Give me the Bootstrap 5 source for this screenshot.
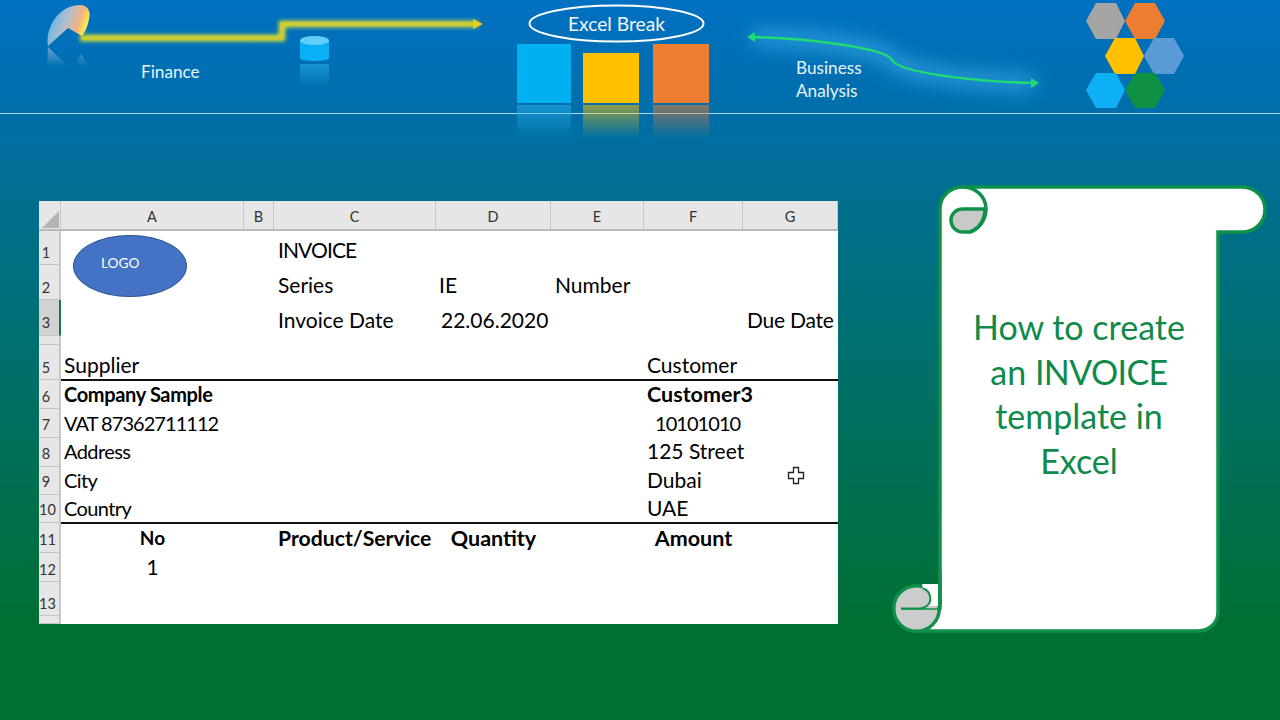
<!DOCTYPE html>
<html lang="en">
<head>
<meta charset="utf-8">
<title>How to create an INVOICE template in Excel</title>
<link href="https://cdn.jsdelivr.net/npm/bootstrap@5.3.0/dist/css/bootstrap.min.css" rel="stylesheet">
<style>
html,body{height:100%}
body{width:1280px;height:720px;overflow:hidden;margin:0;font-family:Lato,"Liberation Sans",sans-serif;
  background:linear-gradient(180deg,#0070c2 0,#006faa 110px,#006f90 195px,#006f33 625px,#006f33 100%)}
.slide-band{height:114px;border-bottom:1px solid #a9d8ee}
.band-art{left:0;top:0;width:1280px;height:140px}
.band-label{color:#e6f4fb;font-size:17.200px;line-height:23px;white-space:nowrap}
.lbl-fin{left:141px;top:60px}
.lbl-biz{left:796px;top:56px}
.lbl-brand{left:529px;top:5px;width:175px;height:37px;font-size:19.200px;color:#f0f9ff}
.slide-main{padding:71px 0 0 39px}
.sheet{margin-top:16px;width:799px;height:423px;background:#fff;display:grid;color:#000;
  grid-template-columns:22px 183px 30px 162px 115px 93px 99px 95px;
  grid-template-rows:30px 34px 35px 36px 9px 35px 29px 29px 29px 28px 28px 30px 29px 34px 8px}
.sheet>div{white-space:nowrap;font-size:21px;line-height:26px;display:flex;align-items:center;min-width:0;min-height:0}
.sheet>.hd{background:#e6e6e6;font-size:14.500px;color:#333;justify-content:center;padding-top:3px;border-bottom:2px solid #b9b9b9;border-right:1px solid #c6c6c6;line-height:16px}
.sheet>.rw{background:#e6e6e6;font-size:14.500px;color:#333;grid-column:1;justify-content:flex-start;padding:5px 0 0 0;border-bottom:1px solid #c4c4c4;border-right:2px solid #c9c9c9;line-height:16px;overflow:hidden}
.sheet>.rw-lo{padding-top:11px}
.sheet>.rw-hi{padding-top:3px}
.rw span{display:block;width:14px;text-align:center}
.sheet>.rw-on{background:#d2d2d2;border-right:2px solid #217346}
.corner{width:0;height:0;border-style:solid;border-width:0 0 17px 17px;border-color:transparent transparent #b4b4b4 transparent;margin:auto 0 1px 3px}
.sheet>.corner-cell{background:#e6e6e6;border-bottom:2px solid #b9b9b9;border-right:1px solid #c6c6c6;grid-column:1;grid-row:1}
.ca{grid-column:2}.cb{grid-column:3}.cc{grid-column:4}.cd{grid-column:5}.ce{grid-column:6}.cf{grid-column:7}.cg{grid-column:8}
.r0{grid-row:1}.r1{grid-row:2}.r2{grid-row:3}.r3{grid-row:4}.r4{grid-row:5}.r5{grid-row:6}.r6{grid-row:7}.r7{grid-row:8}.r8{grid-row:9}.r9{grid-row:10}.r10{grid-row:11}.r11{grid-row:12}.r12{grid-row:13}.r13{grid-row:14}.r14{grid-row:15}
.sheet>.t{padding-left:3px;padding-top:4px}
.sheet>.up{padding-top:0;padding-bottom:1px}
.sheet>.up2{padding-top:0;padding-bottom:3px}
.sheet>.tc{justify-content:center;padding-left:0}
.sheet>.b{font-weight:700;font-size:21.500px}
.sheet>.b-co{font-size:20px;letter-spacing:-.35px}
.sheet>.b-no{font-size:19px}
.sheet>.b-ps{font-size:21.200px}
.sheet>.nar{font-size:20px;letter-spacing:-.6px}
.sheet>.nar-d{font-size:20px;letter-spacing:-.95px}
.sheet>.inv{letter-spacing:-.9px}
.sheet>.due{letter-spacing:-.25px}
.sheet>.in4{padding-left:4px}
.sheet>.in5{padding-left:5px}
.sheet>.in11{padding-left:11px}
.sheet>.rule{grid-column:2/-1;align-self:end;height:2px;background:#111;min-height:2px;margin-bottom:-1px}
.sheet>.logo-oval{left:34px;top:34px;width:114px;height:62px;border-radius:50%;background:#4472c4;border:1px solid #2f528f;color:#fff;font-size:13.700px;padding:15px 0 0 27px;line-height:24px;align-items:flex-start}
.cross{left:748px;top:265px;width:18px;height:20px}
.scroll-box{margin-left:53px;width:380px;height:456px;flex:none}
.scroll-art{left:0;top:0;width:380px;height:456px}
.scroll-text{width:280px;margin-left:48px;padding-top:120px;color:#108a4a;font-size:34px;line-height:44.600px;text-align:center}
.cap-tight{letter-spacing:-.6px}
</style>
</head>
<body>
<div class="slide-band position-relative">
  <svg class="band-art position-absolute" viewBox="0 0 1280 140" aria-hidden="true">
    <defs>
      <linearGradient id="pie" x1="0" y1="0" x2="1" y2="0.35"><stop offset="0" stop-color="#3fb2f2"/><stop offset=".55" stop-color="#b8bfc8"/><stop offset=".8" stop-color="#f3b37c"/><stop offset="1" stop-color="#fff04a"/></linearGradient>
      <linearGradient id="fadeB" x1="0" y1="0" x2="0" y2="1"><stop offset="0" stop-color="#28b0ee" stop-opacity=".55"/><stop offset="1" stop-color="#28b0ee" stop-opacity="0"/></linearGradient>
      <linearGradient id="fadeY" x1="0" y1="0" x2="0" y2="1"><stop offset="0" stop-color="#ffc000" stop-opacity=".55"/><stop offset="1" stop-color="#ffc000" stop-opacity="0"/></linearGradient>
      <linearGradient id="fadeO" x1="0" y1="0" x2="0" y2="1"><stop offset="0" stop-color="#ed7d31" stop-opacity=".55"/><stop offset="1" stop-color="#ed7d31" stop-opacity="0"/></linearGradient>
      <linearGradient id="fadeP" x1="0" y1="0" x2="0" y2="1"><stop offset="0" stop-color="#b5c8d8" stop-opacity=".6"/><stop offset="1" stop-color="#b5c8d8" stop-opacity="0"/></linearGradient>
      <filter id="blur2" x="-10%" y="-300%" width="120%" height="700%"><feGaussianBlur stdDeviation="2"/></filter>
      <filter id="blur8" x="-20%" y="-100%" width="140%" height="300%"><feGaussianBlur stdDeviation="9"/></filter>
    </defs>
    <path d="M48 46C45 26 60 5 80 5C88 5 91 12 89 19C88 26 85 32 82 36L68 28Z" fill="url(#pie)"/>
    <path d="M48 47L68 66L47 66Z M75 66L81 54L88 66Z" fill="url(#fadeP)"/>
    <path d="M80 38H282V24H478" fill="none" stroke="#eeea28" stroke-width="6" filter="url(#blur2)"/>
    <path d="M82 38H282V24H474" fill="none" stroke="#cfca30" stroke-width="3"/>
    <path d="M473 19L483 24L473 29Z" fill="#e6c81e"/>
    <path d="M300 41V58C300 62 329 62 329 58V41Z" fill="#0ab0f5"/>
    <ellipse cx="314.500" cy="40.500" rx="14.500" ry="4.500" fill="#63cdfa"/>
    <rect x="300" y="64" width="29" height="23" fill="url(#fadeB)"/>
    <rect x="517" y="44" width="54" height="59" fill="#00b0f0"/>
    <rect x="583" y="53" width="56" height="50" fill="#ffc000"/>
    <rect x="653" y="44" width="56" height="59" fill="#ed7d31"/>
    <rect x="517" y="105" width="54" height="33" fill="url(#fadeB)"/>
    <rect x="583" y="105" width="56" height="33" fill="url(#fadeY)"/>
    <rect x="653" y="105" width="56" height="33" fill="url(#fadeO)"/>
    <ellipse cx="616.500" cy="23.500" rx="87" ry="18" fill="none" stroke="#fff" stroke-width="2"/>
    <path d="M752 37C800 38 885 47 892 60C900 74 985 82 1034 83" fill="none" stroke="#3fb0f0" stroke-opacity=".6" stroke-width="18" filter="url(#blur8)"/>
    <path d="M752 37C800 38 885 47 892 60C900 74 985 82 1034 83" fill="none" stroke="#1fdc72" stroke-width="2.400"/>
    <path d="M755 32L747 37L755 42Z M1031 78L1039 83L1031 88Z" fill="#1fdc72"/>
    <polygon points="1086,21 1096,3 1116,3 1125,21 1116,39 1096,39" fill="#a5a5a5"/>
    <polygon points="1125,21 1135,3 1155,3 1165,21 1155,39 1135,39" fill="#ed7d31"/>
    <polygon points="1105,56 1115,38 1135,38 1144,56 1135,74 1115,74" fill="#ffc000"/>
    <polygon points="1144,56 1154,38 1174,38 1184,56 1174,74 1154,74" fill="#5b9bd5"/>
    <polygon points="1086,90 1096,73 1116,73 1125,90 1116,108 1096,108" fill="#0eb0f5"/>
    <polygon points="1125,90 1135,73 1155,73 1165,90 1155,108 1135,108" fill="#0f9145"/>
  </svg>
  <span class="band-label lbl-fin position-absolute">Finance</span>
  <div class="band-label lbl-biz position-absolute">Business<br>Analysis</div>
  <div class="band-label lbl-brand position-absolute d-flex align-items-center justify-content-center">Excel Break</div>
</div>

<div class="slide-main d-flex align-items-start">
  <div class="sheet position-relative">
    <div class="corner-cell"><div class="corner"></div></div>
    <div class="hd ca r0">A</div><div class="hd cb r0">B</div><div class="hd cc r0">C</div><div class="hd cd r0">D</div><div class="hd ce r0">E</div><div class="hd cf r0">F</div><div class="hd cg r0">G</div>

    <div class="rw rw-lo r1"><span>1</span></div>
    <div class="rw rw-lo r2"><span>2</span></div>
    <div class="rw rw-lo rw-on r3"><span>3</span></div>
    <div class="rw r4"></div>
    <div class="rw rw-lo r5"><span>5</span></div>
    <div class="rw r6"><span>6</span></div>
    <div class="rw rw-hi r7"><span>7</span></div>
    <div class="rw rw-hi r8"><span>8</span></div>
    <div class="rw rw-hi r9"><span>9</span></div>
    <div class="rw rw-hi r10"><span>10</span></div>
    <div class="rw r11"><span>11</span></div>
    <div class="rw r12"><span>12</span></div>
    <div class="rw rw-lo r13"><span>13</span></div>
    <div class="rw r14"></div>

    <div class="t in4 inv cc r1">INVOICE</div>
    <div class="t in4 cc r2">Series</div>
    <div class="t cd r2">IE</div>
    <div class="t in4 ce r2">Number</div>
    <div class="t in4 cc r3">Invoice Date</div>
    <div class="t in5 cd r3">22.06.2020</div>
    <div class="t in4 due cg r3">Due Date</div>

    <div class="t ca r5">Supplier</div>
    <div class="t cf r5">Customer</div>
    <div class="rule ca r5"></div>

    <div class="t up b b-co ca r6">Company Sample</div>
    <div class="t up b cf r6">Customer3</div>
    <div class="t up nar-d ca r7">VAT 87362711112</div>
    <div class="t up in11 nar-d cf r7">10101010</div>
    <div class="t up2 nar ca r8">Address</div>
    <div class="t up2 cf r8">125 Street</div>
    <div class="t up2 nar ca r9">City</div>
    <div class="t up2 cf r9">Dubai</div>
    <div class="t up2 nar ca r10">Country</div>
    <div class="t up2 cf r10">UAE</div>
    <div class="rule ca r10"></div>

    <div class="t up b b-no tc ca r11">No</div>
    <div class="t up b b-ps in4 cc r11">Product/Service</div>
    <div class="t up b tc cd r11">Quantity</div>
    <div class="t up b tc cf r11">Amount</div>
    <div class="t up tc ca r12">1</div>

    <div class="logo-oval position-absolute">LOGO</div>
    <svg class="cross position-absolute" viewBox="0 0 18 20" aria-hidden="true">
      <path d="M6.500 1.500H11.500V6.500H16.500V12.500H11.500V17.500H6.500V12.500H1.500V6.500H6.500Z" fill="#fff" stroke="#222" stroke-width="1.300"/>
    </svg>
  </div>

  <div class="scroll-box position-relative">
    <svg class="scroll-art position-absolute" viewBox="891 185 380 456" aria-hidden="true">
      <path d="M940 209C940 196 950 187 963 187H1242C1255 187 1265 197 1265 209.500C1265 222 1255 232 1242 232H1218V612C1218 623 1209 631 1198 631H916V608H940Z" fill="#fff" stroke="#0f9149" stroke-width="3.500"/>
      <circle cx="916.500" cy="608.500" r="22.800" fill="#ccc" stroke="#0f9149" stroke-width="3.500"/>
      <path d="M922 584H938.200V606H927C932 601 931 592 923 589Z" fill="#fff"/>
      <path d="M923 588.500C931 591 933 602 926 606.500Q924 608 920 608.500H901" fill="none" stroke="#0f9149" stroke-width="2"/>
      <path d="M901 609H938" fill="none" stroke="#0f9149" stroke-width="1.500"/>
      <path d="M940 570V606" fill="none" stroke="#0f9149" stroke-width="3.500"/>
      <path d="M985 209H963C955 209 951 215 951 220C951 227 956 232 963 232H970C979 229 985 220 985 209Z" fill="#c9c9c9" stroke="#0f9149" stroke-width="3.500" stroke-linejoin="round"/>
      <path d="M963 187C976 187 986 197 986 209C986 220 979 229 970 232" fill="none" stroke="#0f9149" stroke-width="3.500"/>
    </svg>
    <div class="scroll-text position-relative">How to create<br>an <span class="cap-tight">INVOICE</span><br>template in<br>Excel</div>
  </div>
</div>
<script src="https://cdn.jsdelivr.net/npm/bootstrap@5.3.0/dist/js/bootstrap.bundle.min.js"></script>
</body>
</html>
